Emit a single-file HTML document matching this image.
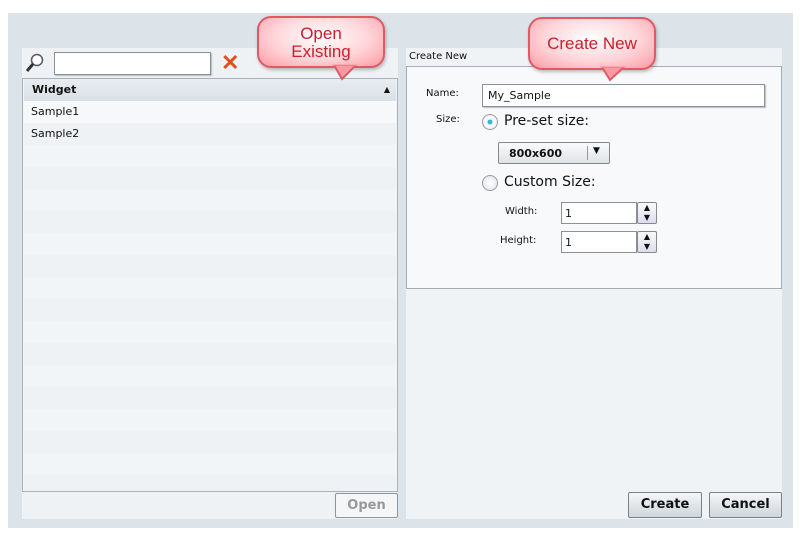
<!DOCTYPE html>
<html><head><style>
body{margin:0;width:801px;height:539px;background:#fff;position:relative;overflow:hidden;font-family:"DejaVu Sans","Liberation Sans",sans-serif;font-size:11px;color:#111}
.a{position:absolute;box-sizing:border-box}
.row{position:absolute;left:1px;right:1px;height:22px}
.btn{position:absolute;box-sizing:border-box;border:1px solid #7a8088;border-radius:2px;background:linear-gradient(#f4f6f8,#cfd6dc);font-weight:bold;font-size:13px;text-align:center;line-height:23px}
.callout{position:absolute;box-sizing:border-box;border:2px solid #e05a66;border-radius:14px;background:radial-gradient(ellipse at 50% 40%,#fff 0%,#ffd4d8 55%,#fb9aa3 100%);color:#c8202e;font-family:"Liberation Sans",sans-serif;font-size:17px;text-align:center;box-shadow:1px 2px 3px rgba(0,0,0,.25)}
.spin{position:absolute;box-sizing:border-box;width:20px;height:22px;border:1px solid #888;border-radius:2px;background:linear-gradient(#fafafa,#dde);font-size:8px;line-height:10px;text-align:center}
</style></head><body>
<div class="a" style="left:8px;top:13px;width:785px;height:515px;background:#dce3e9"></div>
<!-- left panel -->
<div class="a" style="left:22px;top:48px;width:376px;height:471px;background:#eef2f5"></div>
<svg class="a" style="left:24px;top:52px" width="22" height="22"><circle cx="13" cy="8" r="5.5" fill="#fff" stroke="#556" stroke-width="1.5"/><line x1="9" y1="12" x2="3" y2="19" stroke="#333" stroke-width="3"/></svg>
<div class="a" style="left:54px;top:52px;width:157px;height:23px;background:#fff;border:1px solid #8a9199;box-shadow:1px 1px 1px #bbb"></div>
<div class="a" style="left:221px;top:50px;font-size:22px;font-weight:bold;color:#e05020;font-family:'Liberation Sans'">✕</div>
<div class="a" style="left:22px;top:78px;width:376px;height:414px;border:1px solid #a9b2ba;background:#f2f5f8">
 <div class="row" style="top:0;height:22px;background:linear-gradient(#e9edf1,#d9e0e6);border-bottom:1px solid #b5bdc5;font-weight:bold;line-height:21px;padding-left:8px">Widget<span style="position:absolute;right:6px;font-size:8px">▲</span></div>
 <div class="row" style="top:22px;background:#f6f8fa;line-height:22px;padding-left:7px">Sample1</div>
 <div class="row" style="top:44px;background:#eef2f5;line-height:22px;padding-left:7px">Sample2</div>
 <div class="row" style="top:88px;background:#eef2f5"></div><div class="row" style="top:132px;background:#eef2f5"></div><div class="row" style="top:176px;background:#eef2f5"></div><div class="row" style="top:220px;background:#eef2f5"></div><div class="row" style="top:264px;background:#eef2f5"></div><div class="row" style="top:308px;background:#eef2f5"></div><div class="row" style="top:352px;background:#eef2f5"></div><div class="row" style="top:396px;height:16px;background:#eef2f5"></div>
</div>
<div class="btn" style="left:335px;top:493px;width:63px;height:25px;color:#999;background:#f4f6f8;border-color:#8d959c">Open</div>
<!-- right panel -->
<div class="a" style="left:406px;top:48px;width:376px;height:471px;background:#f0f3f6"></div>
<div class="a" style="left:409px;top:51px;font-size:10px">Create New</div>
<div class="a" style="left:406px;top:66px;width:376px;height:223px;border:1px solid #a4adb5;background:#f7f9fa"></div>
<div class="a" style="left:426px;top:88px;font-size:10px">Name:</div>
<div class="a" style="left:436px;top:114px;font-size:10px">Size:</div>
<div class="a" style="left:482px;top:84px;width:283px;height:23px;border:1px solid #8a9199;background:#fff;box-shadow:1px 1px 1px #bbb;padding:4px 0 0 5px">My_Sample</div>
<div class="a" style="left:482px;top:114px;width:16px;height:16px;border-radius:50%;border:1px solid #99a;background:radial-gradient(circle,#3ab0d8 0 2px,#fff 3px,#e4e8ec)"></div>
<div class="a" style="left:504px;top:113px;font-size:14px;font-family:'DejaVu Sans'">Pre-set size:</div>
<div class="a" style="left:498px;top:142px;width:112px;height:22px;border:1px solid #888;border-radius:2px;background:linear-gradient(#fafbfc,#dfe4e8);font-weight:bold;font-size:11px;padding:4px 0 0 10px">800x600<span style="position:absolute;left:88px;top:3px;height:14px;border-left:1px solid #999"></span><span style="position:absolute;left:94px;top:3px;font-size:9px">▼</span></div>
<div class="a" style="left:482px;top:175px;width:16px;height:16px;border-radius:50%;border:1px solid #99a;background:radial-gradient(circle,#fff,#dde2e6)"></div>
<div class="a" style="left:504px;top:174px;font-size:14px">Custom Size:</div>
<div class="a" style="left:505px;top:206px;font-size:10px">Width:</div>
<div class="a" style="left:500px;top:235px;font-size:10px">Height:</div>
<div class="a" style="left:561px;top:202px;width:76px;height:22px;border:1px solid #8a9199;background:#fff;padding:4px 0 0 3px">1</div>
<div class="spin" style="left:637px;top:202px">▲<br>▼</div>
<div class="a" style="left:561px;top:231px;width:76px;height:22px;border:1px solid #8a9199;background:#fff;padding:4px 0 0 3px">1</div>
<div class="spin" style="left:637px;top:231px">▲<br>▼</div>
<div class="btn" style="left:628px;top:492px;width:74px;height:26px">Create</div>
<div class="btn" style="left:709px;top:492px;width:73px;height:26px">Cancel</div>
<!-- callouts -->
<div class="callout" style="left:257px;top:16px;width:128px;height:52px;line-height:18px;padding-top:7px">Open<br>Existing</div>
<svg class="a" style="left:330px;top:64px" width="30" height="18"><path d="M4 1 L26 1 L12 15 Z" fill="#fb9aa3" stroke="#e05a66" stroke-width="2"/><path d="M2 0 L28 0" stroke="#fca9b0" stroke-width="3"/></svg>
<div class="callout" style="left:528px;top:17px;width:128px;height:53px;line-height:50px">Create New</div>
<svg class="a" style="left:598px;top:66px" width="30" height="18"><path d="M4 1 L26 1 L12 14 Z" fill="#fb9aa3" stroke="#e05a66" stroke-width="2"/><path d="M2 0 L28 0" stroke="#fca9b0" stroke-width="3"/></svg>
</body></html>
